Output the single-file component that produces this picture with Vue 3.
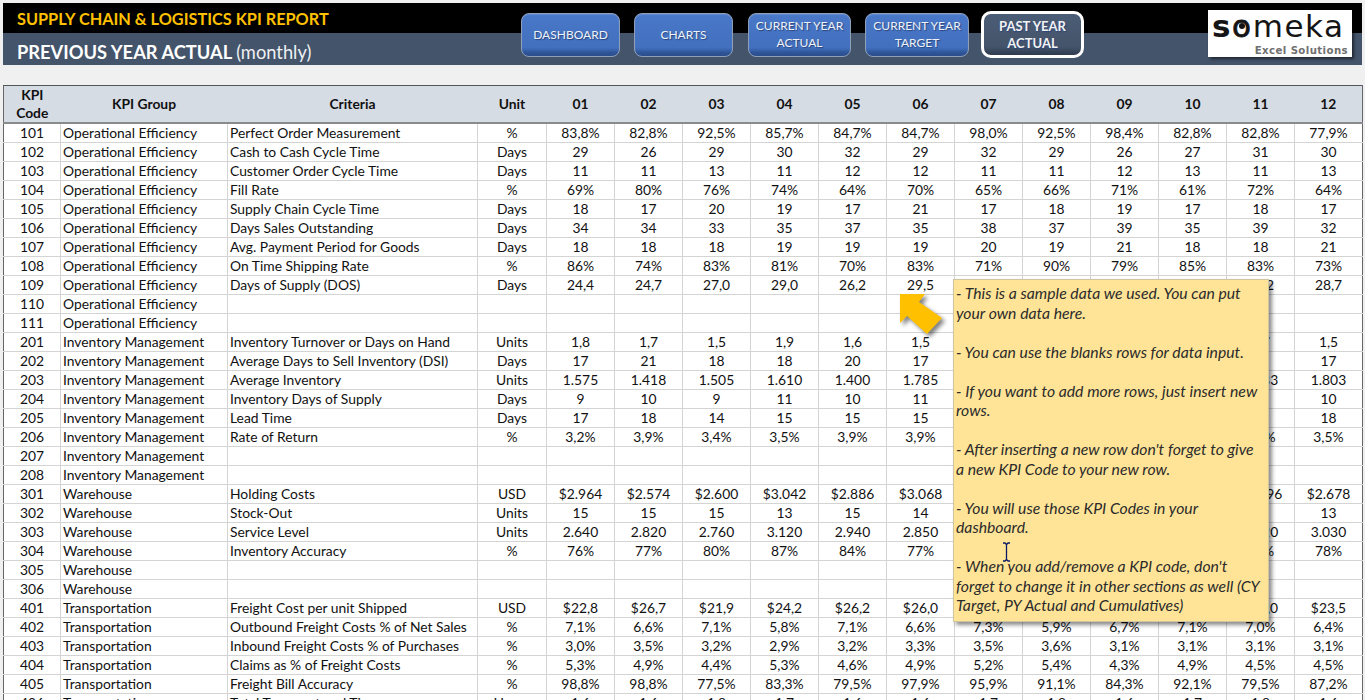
<script setup>
// Navigation buttons on the header band
const navButtons = [
  { label: 'DASHBOARD', width: 99, gap: 14 },
  { label: 'CHARTS', width: 99, gap: 15 },
  { label: 'CURRENT YEAR\nACTUAL', width: 103, gap: 14 },
  { label: 'CURRENT YEAR\nTARGET', width: 104, gap: 12 }
]

const months = ['01', '02', '03', '04', '05', '06', '07', '08', '09', '10', '11', '12']

// "_" marks a cell that stays empty
const parse = (values) => (values ? values.split(' ').map((v) => (v === '_' ? '' : v)) : months.map(() => ''))

const OE = 'Operational Efficiency'
const IM = 'Inventory Management'
const WH = 'Warehouse'
const TR = 'Transportation'

const rows = [
  ['101', OE, 'Perfect Order Measurement', '%', '83,8% 82,8% 92,5% 85,7% 84,7% 84,7% 98,0% 92,5% 98,4% 82,8% 82,8% 77,9%'],
  ['102', OE, 'Cash to Cash Cycle Time', 'Days', '29 26 29 30 32 29 32 29 26 27 31 30'],
  ['103', OE, 'Customer Order Cycle Time', 'Days', '11 11 13 11 12 12 11 11 12 13 11 13'],
  ['104', OE, 'Fill Rate', '%', '69% 80% 76% 74% 64% 70% 65% 66% 71% 61% 72% 64%'],
  ['105', OE, 'Supply Chain Cycle Time', 'Days', '18 17 20 19 17 21 17 18 19 17 18 17'],
  ['106', OE, 'Days Sales Outstanding', 'Days', '34 34 33 35 37 35 38 37 39 35 39 32'],
  ['107', OE, 'Avg. Payment Period for Goods', 'Days', '18 18 18 19 19 19 20 19 21 18 18 21'],
  ['108', OE, 'On Time Shipping Rate', '%', '86% 74% 83% 81% 70% 83% 71% 90% 79% 85% 83% 73%'],
  ['109', OE, 'Days of Supply (DOS)', 'Days', '24,4 24,7 27,0 29,0 26,2 29,5 _ _ _ _ 27,2 28,7'],
  ['110', OE, '', '', ''],
  ['111', OE, '', '', ''],
  ['201', IM, 'Inventory Turnover or Days on Hand', 'Units', '1,8 1,7 1,5 1,9 1,6 1,5 _ _ _ _ 1,7 1,5'],
  ['202', IM, 'Average Days to Sell Inventory (DSI)', 'Days', '17 21 18 18 20 17 _ _ _ _ 18 17'],
  ['203', IM, 'Average Inventory', 'Units', '1.575 1.418 1.505 1.610 1.400 1.785 _ _ _ _ 1.683 1.803'],
  ['204', IM, 'Inventory Days of Supply', 'Days', '9 10 9 11 10 11 _ _ _ _ 10 10'],
  ['205', IM, 'Lead Time', 'Days', '17 18 14 15 15 15 _ _ _ _ 15 18'],
  ['206', IM, 'Rate of Return', '%', '3,2% 3,9% 3,4% 3,5% 3,9% 3,9% _ _ _ _ 3,6% 3,5%'],
  ['207', IM, '', '', ''],
  ['208', IM, '', '', ''],
  ['301', WH, 'Holding Costs', 'USD', '$2.964 $2.574 $2.600 $3.042 $2.886 $3.068 _ _ _ _ $2.796 $2.678'],
  ['302', WH, 'Stock-Out', 'Units', '15 15 15 13 15 14 _ _ _ _ 14 13'],
  ['303', WH, 'Service Level', 'Units', '2.640 2.820 2.760 3.120 2.940 2.850 _ _ _ _ 2.820 3.030'],
  ['304', WH, 'Inventory Accuracy', '%', '76% 77% 80% 87% 84% 77% _ _ _ _ 76% 78%'],
  ['305', WH, '', '', ''],
  ['306', WH, '', '', ''],
  ['401', TR, 'Freight Cost per unit Shipped', 'USD', '$22,8 $26,7 $21,9 $24,2 $26,2 $26,0 _ _ _ _ $24,0 $23,5'],
  ['402', TR, 'Outbound Freight Costs % of Net Sales', '%', '7,1% 6,6% 7,1% 5,8% 7,1% 6,6% 7,3% 5,9% 6,7% 7,1% 7,0% 6,4%'],
  ['403', TR, 'Inbound Freight Costs % of Purchases', '%', '3,0% 3,5% 3,2% 2,9% 3,2% 3,3% 3,5% 3,6% 3,1% 3,1% 3,1% 3,1%'],
  ['404', TR, 'Claims as % of Freight Costs', '%', '5,3% 4,9% 4,4% 5,3% 4,6% 4,9% 5,2% 5,4% 4,3% 4,9% 4,5% 4,5%'],
  ['405', TR, 'Freight Bill Accuracy', '%', '98,8% 98,8% 77,5% 83,3% 79,5% 97,9% 95,9% 91,1% 84,3% 92,1% 79,5% 87,2%'],
  ['406', TR, 'Total Transport and Time', 'Hours', '1,6 1,6 1,8 1,7 1,6 1,6 1,7 1,8 1,6 1,7 1,8 1,6']
].map(([code, group, criteria, unit, values]) => ({ code, group, criteria, unit, values: parse(values) }))

const noteText = `- This is a sample data we used. You can put
your own data here.

- You can use the blanks rows for data input.

- If you want to add more rows, just insert new
rows.

- After inserting a new row don't forget to give
a new KPI Code to your new row.

- You will use those KPI Codes in your
dashboard.

- When you add/remove a KPI code, don't
forget to change it in other sections as well (CY
Target, PY Actual and Cumulatives)`
</script>

<template>
  <div class="page">
    <header class="banner">
      <div class="titles">
        <h1 class="report-title">SUPPLY CHAIN &amp; LOGISTICS KPI REPORT</h1>
        <h2 class="sheet-title">PREVIOUS YEAR ACTUAL <span class="sheet-sub">(monthly)</span></h2>
      </div>
      <nav class="nav">
        <button
          v-for="b in navButtons"
          :key="b.label"
          class="nav-btn"
          :style="{ width: b.width + 'px', marginRight: b.gap + 'px' }"
        >{{ b.label }}</button>
        <button class="nav-btn active">PAST YEAR
ACTUAL</button>
      </nav>
      <div class="logo">
        <div class="logo-word"><b>s</b><span class="logo-o">o</span>meka</div>
        <div class="logo-sub">Excel Solutions</div>
      </div>
    </header>

    <table class="kpi-table">
      <colgroup>
        <col style="width: 57px" />
        <col style="width: 167px" />
        <col style="width: 250px" />
        <col style="width: 69px" />
        <col v-for="m in months" :key="m" style="width: 68px" />
      </colgroup>
      <thead>
        <tr>
          <th>KPI<br />Code</th>
          <th>KPI Group</th>
          <th>Criteria</th>
          <th>Unit</th>
          <th v-for="m in months" :key="m">{{ m }}</th>
        </tr>
      </thead>
      <tbody>
        <tr v-for="row in rows" :key="row.code">
          <td class="center">{{ row.code }}</td>
          <td>{{ row.group }}</td>
          <td>{{ row.criteria }}</td>
          <td class="center">{{ row.unit }}</td>
          <td v-for="(v, i) in row.values" :key="i" class="center">{{ v }}</td>
        </tr>
      </tbody>
    </table>

    <!-- Arrow and note lying over the table -->
    <svg class="arrow" width="50" height="48" viewBox="0 0 50 48">
      <polygon points="1,1 26,1 20,9 43,25 28,41 8,23 1,30" fill="#ffc000" />
    </svg>
    <div class="note">{{ noteText }}</div>
    <svg class="cursor" width="9" height="20" viewBox="0 0 9 20">
      <path d="M1 1h2l1 1h1l1-1h2M4.5 2v16M1 19h2l1-1h1l1 1h2" fill="none" stroke="#0b1a66" stroke-width="1.3" />
    </svg>
  </div>
</template>

<style scoped>
.page {
  position: relative;
  height: 700px;
  overflow: hidden;
  padding: 3px 3px 0;
  box-sizing: border-box;
  background-color: #f0f0f0;
  font-family: Lato, "Open Sans", sans-serif;
  color: #111;
}

/* Banner: black stripe over the slate one */
.banner {
  display: flex;
  align-items: flex-start;
  height: 62px;
  background: linear-gradient(#000 0, #000 30px, #44546a 30px, #44546a 100%);
}

.titles {
  width: 518px;
  padding-left: 14px;
  box-sizing: border-box;
}

.report-title {
  margin: 0;
  height: 30px;
  font-size: 16.3px;
  line-height: 32px;
  font-weight: 700;
  color: #ffc000;
}

.sheet-title {
  margin: 0;
  height: 32px;
  font-size: 18.3px;
  line-height: 38px;
  font-weight: 700;
  color: #fff;
}

.sheet-sub {
  font-weight: 400;
  color: #eef0f3;
}

.nav {
  display: flex;
  align-items: flex-start;
  padding-top: 10px;
}

.nav-btn {
  height: 44px;
  padding: 0 0 2px;
  border: 1px solid #8f9fb8;
  border-radius: 8px;
  background: linear-gradient(#4a78c8 0, #4270bf 80%, #2f5597 92%, #2a4d8c 100%);
  box-shadow: inset 0 1px 1px #5f8ad4;
  font-family: inherit;
  font-size: 12px;
  line-height: 17px;
  color: #eef2fa;
  white-space: pre-line;
  text-shadow: 1px 1px 1px #2a4478;
}

.nav-btn.active {
  width: 103px;
  height: 47px;
  margin-top: -2px;
  padding: 0;
  border: 3px solid #fff;
  border-radius: 10px;
  background: linear-gradient(#4b5c76 0, #44546a 80%, #2f3b4e 100%);
  box-shadow: none;
  font-size: 13px;
  font-weight: 700;
  line-height: 17px;
  color: #f2f2f2;
}

.logo {
  width: 144px;
  height: 47px;
  margin: 7px 0 0 124px;
  padding: 0 4px;
  box-sizing: border-box;
  background-color: #fff;
  box-shadow: 2px 2px 3px rgba(0, 0, 0, 0.55);
  color: #151515;
}

.logo-word {
  font-family: "DejaVu Sans", sans-serif;
  font-size: 31px;
  line-height: 33px;
  letter-spacing: 1.6px;
  white-space: nowrap;
}

.logo-o {
  position: relative;
  -webkit-text-stroke: 0.8px #151515;
}

/* Dark dot in the middle of the logo's o */
.logo-o::after {
  content: "";
  position: absolute;
  left: 7px;
  top: 15px;
  width: 6px;
  height: 6px;
  border-radius: 50%;
  background-color: #151515;
}

.logo-sub {
  margin-top: 1px;
  text-align: right;
  font-family: "DejaVu Sans", sans-serif;
  font-size: 10.2px;
  line-height: 13px;
  font-weight: 700;
  letter-spacing: 0.4px;
  color: #707070;
}

/* Table */
.kpi-table {
  width: 1359px;
  margin-top: 20px;
  border-collapse: collapse;
  table-layout: fixed;
  background-color: #fff;
  font-size: 13.85px;
  border-top: 1px solid #555;
  border-left: 1px solid #666;
  border-right: 1px solid #666;
}

.kpi-table th {
  height: 36px;
  padding: 0;
  background-color: #d6dce4;
  border-bottom: 2px solid #8a8a8a;
  font-weight: 700;
  line-height: 18px;
  text-align: center;
}

.kpi-table td {
  height: 18px;
  padding: 0 2px;
  border-right: 1px solid #d4d4d4;
  border-bottom: 1px solid #d4d4d4;
  line-height: 18px;
  white-space: nowrap;
  overflow: hidden;
}

.kpi-table td:last-child {
  border-right: none;
}

.center {
  text-align: center;
}

/* Overlays */
.arrow {
  position: absolute;
  left: 899px;
  top: 293px;
  filter: drop-shadow(3px 3px 2px rgba(0, 0, 0, 0.5));
}

.note {
  position: absolute;
  left: 953px;
  top: 279px;
  width: 316px;
  height: 343px;
  padding: 3px 0 0 2px;
  box-sizing: border-box;
  background-color: #ffe497;
  border: 1px solid #cfc6a0;
  box-shadow: 3px 3px 4px rgba(0, 0, 0, 0.45);
  font-size: 15.75px;
  font-style: italic;
  line-height: 19.5px;
  color: #2b2b2b;
  white-space: pre;
}

.cursor {
  position: absolute;
  left: 1002px;
  top: 542px;
}
</style>

<style>
html,
body {
  margin: 0;
  overflow: hidden;
}
</style>
